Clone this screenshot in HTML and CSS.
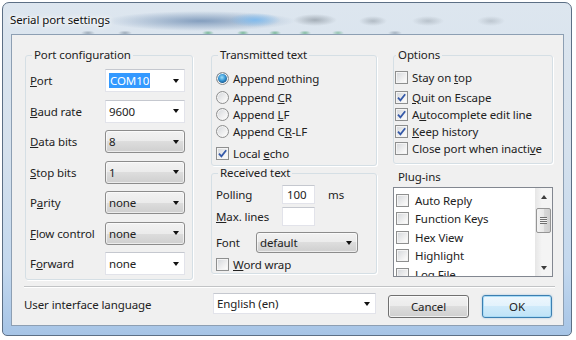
FILE: index.html
```html
<!DOCTYPE html>
<html>
<head>
<meta charset="utf-8">
<title>Serial port settings</title>
<link rel="stylesheet" href="styles.css">
</head>
<body>
<div class="window">
  <div class="titlebar"><span class="title">Serial port settings</span></div>
  <div class="client">
    <div class="main">
      <fieldset class="group port">
        <legend>Port configuration</legend>
        <div class="form">
          <span class="lbl"><u>P</u>ort</span>
          <div class="combo edit"><span class="txt"><span class="sel">COM10</span></span><i class="arrow"></i></div>
          <span class="lbl"><u>B</u>aud rate</span>
          <div class="combo edit"><span class="txt">9600</span><i class="arrow"></i></div>
          <span class="lbl"><u>D</u>ata bits</span>
          <div class="combo list"><span class="txt">8</span><i class="arrow"></i></div>
          <span class="lbl"><u>S</u>top bits</span>
          <div class="combo list"><span class="txt">1</span><i class="arrow"></i></div>
          <span class="lbl">P<u>a</u>rity</span>
          <div class="combo list"><span class="txt">none</span><i class="arrow"></i></div>
          <span class="lbl"><u>F</u>low control</span>
          <div class="combo list"><span class="txt">none</span><i class="arrow"></i></div>
          <span class="lbl">F<u>o</u>rward</span>
          <div class="combo edit"><span class="txt">none</span><i class="arrow"></i></div>
        </div>
      </fieldset>

      <div class="col mid">
        <fieldset class="group tx">
          <legend>Transmitted text</legend>
          <div class="opt first"><span class="radio on"></span><span>Append <u>n</u>othing</span></div>
          <div class="opt"><span class="radio"></span><span>Append <u>C</u>R</span></div>
          <div class="opt"><span class="radio"></span><span>Append <u>L</u>F</span></div>
          <div class="opt"><span class="radio"></span><span>Append C<u>R</u>-LF</span></div>
          <div class="opt echo"><span class="check"><svg viewBox="0 0 11 11" width="11" height="11"><path d="M2 5.6 L4.4 8.3 L9.2 2.2" fill="none" stroke="#3559a8" stroke-width="1.8"/></svg></span><span>Local <u>e</u>cho</span></div>
        </fieldset>
        <fieldset class="group rx">
          <legend>Received text</legend>
          <div class="rx-grid">
            <span class="lbl">Polling</span>
            <div class="editbox">100</div>
            <span class="unit">ms</span>
            <span class="lbl"><u>M</u>ax. lines</span>
            <div class="editbox"></div>
            <span></span>
          </div>
          <div class="font-row">
            <span class="font-lbl">Font</span>
            <div class="combo list font"><span class="txt">default</span><i class="arrow"></i></div>
          </div>
          <div class="opt wrap"><span class="check"></span><span><u>W</u>ord wrap</span></div>
        </fieldset>
      </div>

      <div class="col right">
        <fieldset class="group opts">
          <legend>Options</legend>
          <div class="opt first"><span class="check"></span><span>Stay on <u>t</u>op</span></div>
          <div class="opt"><span class="check"><svg viewBox="0 0 11 11" width="11" height="11"><path d="M2 5.6 L4.4 8.3 L9.2 2.2" fill="none" stroke="#3559a8" stroke-width="1.8"/></svg></span><span><u>Q</u>uit on Escape</span></div>
          <div class="opt"><span class="check"><svg viewBox="0 0 11 11" width="11" height="11"><path d="M2 5.6 L4.4 8.3 L9.2 2.2" fill="none" stroke="#3559a8" stroke-width="1.8"/></svg></span><span>A<u>u</u>tocomplete edit line</span></div>
          <div class="opt"><span class="check"><svg viewBox="0 0 11 11" width="11" height="11"><path d="M2 5.6 L4.4 8.3 L9.2 2.2" fill="none" stroke="#3559a8" stroke-width="1.8"/></svg></span><span><u>K</u>eep history</span></div>
          <div class="opt"><span class="check"></span><span>Close port when inacti<u>v</u>e</span></div>
        </fieldset>
        <div class="plug-lbl">Plug-ins</div>
        <div class="listbox">
          <div class="items">
            <div class="item"><span class="check"></span><span>Auto Reply</span></div>
            <div class="item"><span class="check"></span><span>Function Keys</span></div>
            <div class="item"><span class="check"></span><span>Hex View</span></div>
            <div class="item"><span class="check"></span><span>Highlight</span></div>
            <div class="item"><span class="check"></span><span>Log File</span></div>
          </div>
          <div class="vscroll">
            <div class="sbtn"><i class="up"></i></div>
            <div class="track"><div class="thumb"><i class="grip"></i></div></div>
            <div class="sbtn"><i class="down"></i></div>
          </div>
        </div>
      </div>
    </div>

    <div class="sep"></div>

    <div class="bottom">
      <span class="ui-lbl">User interface language</span>
      <div class="combo edit lang"><span class="txt">English (en)</span><i class="arrow"></i></div>
      <div class="btn cancel">Cancel</div>
      <div class="btn ok">OK</div>
    </div>
  </div>
</div>
</body>
</html>
```

FILE: styles.css
```css
* { box-sizing: border-box; }

body {
  margin: 0;
  width: 576px;
  height: 340px;
  overflow: hidden;
  background: #ffffff;
  font-family: "Noto Sans", "DejaVu Sans", sans-serif;
  font-size: 11.5px;
  letter-spacing: -0.1px;
  color: #222222;
}

u { text-decoration: underline; text-underline-offset: 1px; }

.window {
  margin: 2px 0 0 2px;
  width: 570px;
  height: 334px;
  border: 1px solid #5c6f85;
  border-radius: 7px 7px 5px 5px;
  background: linear-gradient(180deg, #dde6ef 0%, #d5e1ed 45%, #c3d8ee 80%, #a6c4e6 100%);
  display: flex;
  flex-direction: column;
  overflow: hidden;
}

.titlebar {
  height: 31px;
  padding: 9px 0 0 7px;
  background:
    radial-gradient(ellipse 26px 7px at 252px 17px, rgba(120,185,240,0.85), transparent),
    radial-gradient(ellipse 95px 10px at 198px 18px, rgba(60,100,150,0.55), transparent),
    radial-gradient(ellipse 22px 6px at 312px 17px, rgba(80,90,100,0.4), transparent),
    radial-gradient(ellipse 14px 5px at 370px 18px, rgba(80,90,100,0.3), transparent),
    radial-gradient(ellipse 16px 5px at 425px 18px, rgba(80,90,100,0.25), transparent),
    radial-gradient(ellipse 14px 5px at 488px 18px, rgba(80,90,100,0.22), transparent),
    radial-gradient(ellipse 6px 2.5px at 205px 30px, rgba(50,150,90,0.6), transparent),
    radial-gradient(ellipse 6px 2.5px at 240px 30px, rgba(50,150,90,0.6), transparent),
    radial-gradient(ellipse 6px 2.5px at 272px 30px, rgba(50,150,90,0.6), transparent),
    radial-gradient(ellipse 6px 2.5px at 302px 30px, rgba(50,150,90,0.55), transparent),
    radial-gradient(ellipse 6px 2.5px at 335px 30px, rgba(50,150,90,0.45), transparent),
    radial-gradient(ellipse 7px 2.5px at 85px 30px, rgba(60,80,100,0.4), transparent),
    radial-gradient(ellipse 7px 2.5px at 122px 30px, rgba(60,80,100,0.4), transparent),
    radial-gradient(ellipse 7px 2.5px at 392px 30px, rgba(60,80,100,0.35), transparent);
}

.title {
  display: block;
  line-height: 16px;
  font-size: 11.5px;
  color: #111;
  text-shadow: 0 0 6px #fff, 0 0 3px #fff, 0 0 10px #fff;
}

.client {
  margin: 0 7px 0 8px;
  height: 292px;
  border: 1px solid #8d9fb3;
  background: #f0f0f0;
  padding: 13px 0 0 13px;
}

.main { display: flex; align-items: flex-start; }

.col { display: flex; flex-direction: column; }
.mid { margin-left: 18px; width: 166px; }
.right { margin-left: 16px; width: 160px; }

fieldset.group {
  margin: 0;
  min-width: 0;
  border: 1px solid #d5dfe5;
  border-radius: 3px;
  box-shadow: 1px 1px 0 #ffffff;
}

legend {
  margin-left: 2px;
  padding: 0 2px;
  line-height: 14px;
}

.lbl { display: flex; align-items: center; white-space: nowrap; }

/* Port configuration */
.port {
  width: 168px;
  height: 232px;
  padding: 7px 7px 0 4px;
}

.form {
  display: grid;
  grid-template-columns: 75px 80px;
  grid-auto-rows: 23px;
  row-gap: 7.5px;
}

/* Combos */
.combo {
  display: flex;
  align-items: center;
  justify-content: space-between;
  padding: 0 5px 0 3px;
  white-space: nowrap;
}

.combo.edit {
  background: #ffffff;
  border: 1px solid #e2e3ea;
  border-top-color: #c5c8cf;
}

.combo.list {
  border: 1px solid #8c8c8c;
  border-radius: 3px;
  background: linear-gradient(180deg, #f2f2f2 0%, #ebebeb 50%, #dddddd 50%, #cfcfcf 100%);
  box-shadow: inset 0 0 0 1px rgba(255,255,255,0.6);
}

.txt { display: flex; align-items: center; }

.sel {
  background: #3399ff;
  color: #ffffff;
  padding: 0 1px;
  line-height: 15px;
}

.arrow {
  width: 0;
  height: 0;
  border-left: 3.5px solid transparent;
  border-right: 3.5px solid transparent;
  border-top: 4px solid #111;
}

/* Radios and checkboxes */
.opt {
  display: flex;
  align-items: center;
  height: 17px;
  white-space: nowrap;
}

.radio, .check {
  flex: none;
  width: 13px;
  height: 13px;
  margin-right: 4px;
  border: 1px solid #8e8f8f;
  background: linear-gradient(135deg, #d3d6da 0%, #f4f4f4 70%, #ffffff 100%);
  box-shadow: inset 0 0 0 1px #f4f4f4;
  display: flex;
  align-items: center;
  justify-content: center;
}

.radio { border-radius: 50%; }

.radio.on {
  background: radial-gradient(circle at 45% 40%, #9fe0f9 0%, #3a9ad8 35%, #1b5d93 62%, #f1f1f1 66%, #e0e0e0 100%);
}

.check svg { display: block; }

.tx {
  width: 166px;
  height: 118px;
  padding: 7.5px 4px 0 4px;
}
.tx .opt.first { margin-bottom: 2px; }
.tx .opt.echo { margin-top: 5px; }

.rx {
  width: 166px;
  height: 108px;
  margin-top: 4px;
  padding: 5px 4px 0 4px;
}

.rx-grid {
  display: grid;
  grid-template-columns: 66px 33px auto;
  grid-auto-rows: 19px;
  row-gap: 3px;
}

.editbox {
  background: #ffffff;
  border: 1px solid #e2e3ea;
  border-top-color: #c5c8cf;
  padding: 0 4px;
  display: flex;
  align-items: center;
}

.unit { display: flex; align-items: center; margin-left: 13px; }

.font-row {
  display: flex;
  align-items: center;
  margin-top: 6px;
  height: 21px;
}
.font-lbl { width: 40px; }
.combo.font { width: 102px; height: 21px; }

.rx .opt.wrap { margin-top: 4px; height: 15px; }

/* Options */
.opts {
  width: 160px;
  height: 116px;
  padding: 6.5px 2px 0 1px;
}
.opts legend { margin-left: 1px; }
.opts .opt.first { margin-bottom: 3px; }

.plug-lbl {
  margin-top: 6px;
  padding-left: 5px;
  line-height: 14px;
}

.listbox {
  margin-top: 3px;
  width: 160px;
  height: 90px;
  border: 1px solid #828790;
  background: #ffffff;
  display: flex;
}

.items {
  flex: 1;
  padding: 3px 0 0 2px;
  overflow: hidden;
}

.item {
  display: flex;
  align-items: center;
  height: 18.5px;
  white-space: nowrap;
}
.item .check { margin-right: 6px; }

.vscroll {
  width: 17px;
  display: flex;
  flex-direction: column;
  background: linear-gradient(90deg, #e6e6e6 0%, #f4f4f4 40%, #f4f4f4 100%);
}

.sbtn {
  height: 17px;
  display: flex;
  align-items: center;
  justify-content: center;
}

.up, .down {
  width: 0;
  height: 0;
  border-left: 3.5px solid transparent;
  border-right: 3.5px solid transparent;
}
.up { border-bottom: 4px solid #3d3d3d; }
.down { border-top: 4px solid #3d3d3d; }

.track { flex: 1; padding: 3px 1px 0 1px; }

.thumb {
  height: 25px;
  border: 1px solid #959595;
  border-radius: 2px;
  background: linear-gradient(90deg, #f3f3f3 0%, #e8e8e8 50%, #d9d9d9 51%, #cfcfcf 100%);
  display: flex;
  align-items: center;
  justify-content: center;
}

.grip {
  width: 7px;
  height: 7px;
  background: repeating-linear-gradient(180deg, #707070 0 1px, #f2f2f2 1px 2px);
}

/* Separator and bottom row */
.sep {
  margin-top: 6px;
  margin-left: -1px;
  width: 531px;
  height: 2px;
  border-top: 1px solid #c2c4c6;
  border-bottom: 1px solid #ffffff;
}

.bottom {
  display: flex;
  align-items: flex-start;
  margin-top: 5px;
  margin-left: -1px;
}

.ui-lbl {
  width: 189px;
  line-height: 14px;
  margin-top: 5px;
  white-space: nowrap;
}

.combo.lang { width: 163px; height: 21px; }

.btn {
  margin-top: 2px;
  height: 23px;
  display: flex;
  align-items: center;
  justify-content: center;
  border-radius: 3px;
}

.btn.cancel {
  margin-left: 12px;
  width: 81px;
  border: 1px solid #707070;
  background: linear-gradient(180deg, #f2f2f2 0%, #ebebeb 50%, #dddddd 50%, #cfcfcf 100%);
  box-shadow: inset 0 0 0 1px rgba(255,255,255,0.7);
}

.btn.ok {
  margin-left: 13px;
  width: 70px;
  border: 1px solid #3c7fb1;
  background: linear-gradient(180deg, #eef7fd 0%, #e2f2fc 50%, #cfeafa 50%, #bfe3f7 100%);
  box-shadow: inset 0 0 0 1px #a9dbf6, 0 0 2px rgba(60,140,200,0.5);
}
```
